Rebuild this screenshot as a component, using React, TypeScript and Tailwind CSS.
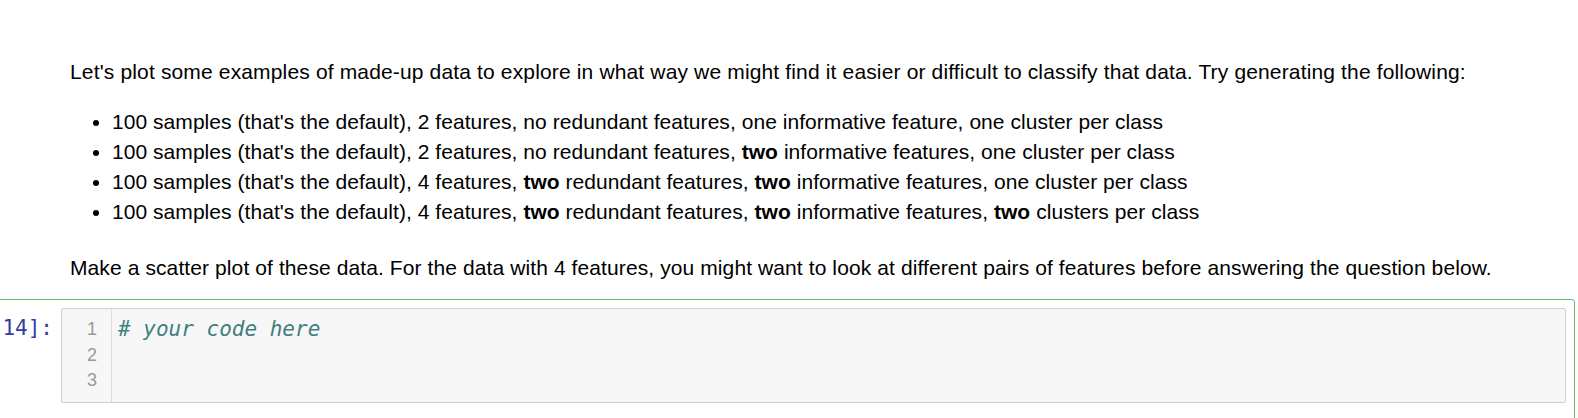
import React from "react";

const items = [
  [
    "100 samples (that's the default), 2 features, no redundant features, one informative feature, one cluster per class",
  ],
  [
    "100 samples (that's the default), 2 features, no redundant features, ",
    "two",
    " informative features, one cluster per class",
  ],
  [
    "100 samples (that's the default), 4 features, ",
    "two",
    " redundant features, ",
    "two",
    " informative features, one cluster per class",
  ],
  [
    "100 samples (that's the default), 4 features, ",
    "two",
    " redundant features, ",
    "two",
    " informative features, ",
    "two",
    " clusters per class",
  ],
];

const mono = "font-['DejaVu_Sans_Mono','Liberation_Mono',monospace]";

export default function App() {
  return (
    <div className="relative h-[418px] w-full overflow-hidden bg-white font-['Liberation_Sans',Arial,sans-serif] text-black">
      {/* markdown cell */}
      <div className="pl-[70px] pt-[57px] text-[21px] leading-[30px] tracking-[0.1px]">
        <p className="tracking-[0.15px]">
          Let's plot some examples of made-up data to explore in what way we might find it easier or difficult to
          classify that data. Try generating the following:
        </p>
        <ul className="mt-[20px] list-disc pl-[42px] tracking-[0.05px]">
          {items.map((parts, i) => (
            <li key={i}>
              {parts.map((p, j) =>
                p === "two" ? (
                  <b key={j} className="font-bold">
                    two
                  </b>
                ) : (
                  <span key={j}>{p}</span>
                )
              )}
            </li>
          ))}
        </ul>
        <p className="mt-[26px] tracking-[0.1px]">
          Make a scatter plot of these data. For the data with 4 features, you might want to look at different pairs
          of features before answering the question below.
        </p>
      </div>

      {/* code cell */}
      <div className="ml-[-70px] mr-[3px] mt-[16px] flex rounded-[3px] border border-[#66BB6A] pb-[30px] pr-[8px] pt-[8px]">
        <div
          className={`flex w-[130px] shrink-0 justify-end whitespace-nowrap pr-[8px] pt-[8px] text-[21px] leading-[25.5px] text-[#303F9F] ${mono}`}
        >
          In [14]:
        </div>
        <div className="flex min-w-0 flex-1 rounded-[2px] border border-[#cfcfcf] bg-[#f7f7f7]">
          <div className="w-[50px] shrink-0 border-r border-[#dddddd] py-[8px] pr-[14px] text-right font-['Liberation_Sans',Arial,sans-serif] text-[18px] leading-[25.5px] text-[#999999]">
            <div>1</div>
            <div>2</div>
            <div>3</div>
          </div>
          <div className={`flex-1 py-[8px] pl-[6px] text-[21px] leading-[25.5px] ${mono}`}>
            <div className="italic text-[#408080]"># your code here</div>
            <div>&nbsp;</div>
            <div>&nbsp;</div>
          </div>
        </div>
      </div>
    </div>
  );
}
